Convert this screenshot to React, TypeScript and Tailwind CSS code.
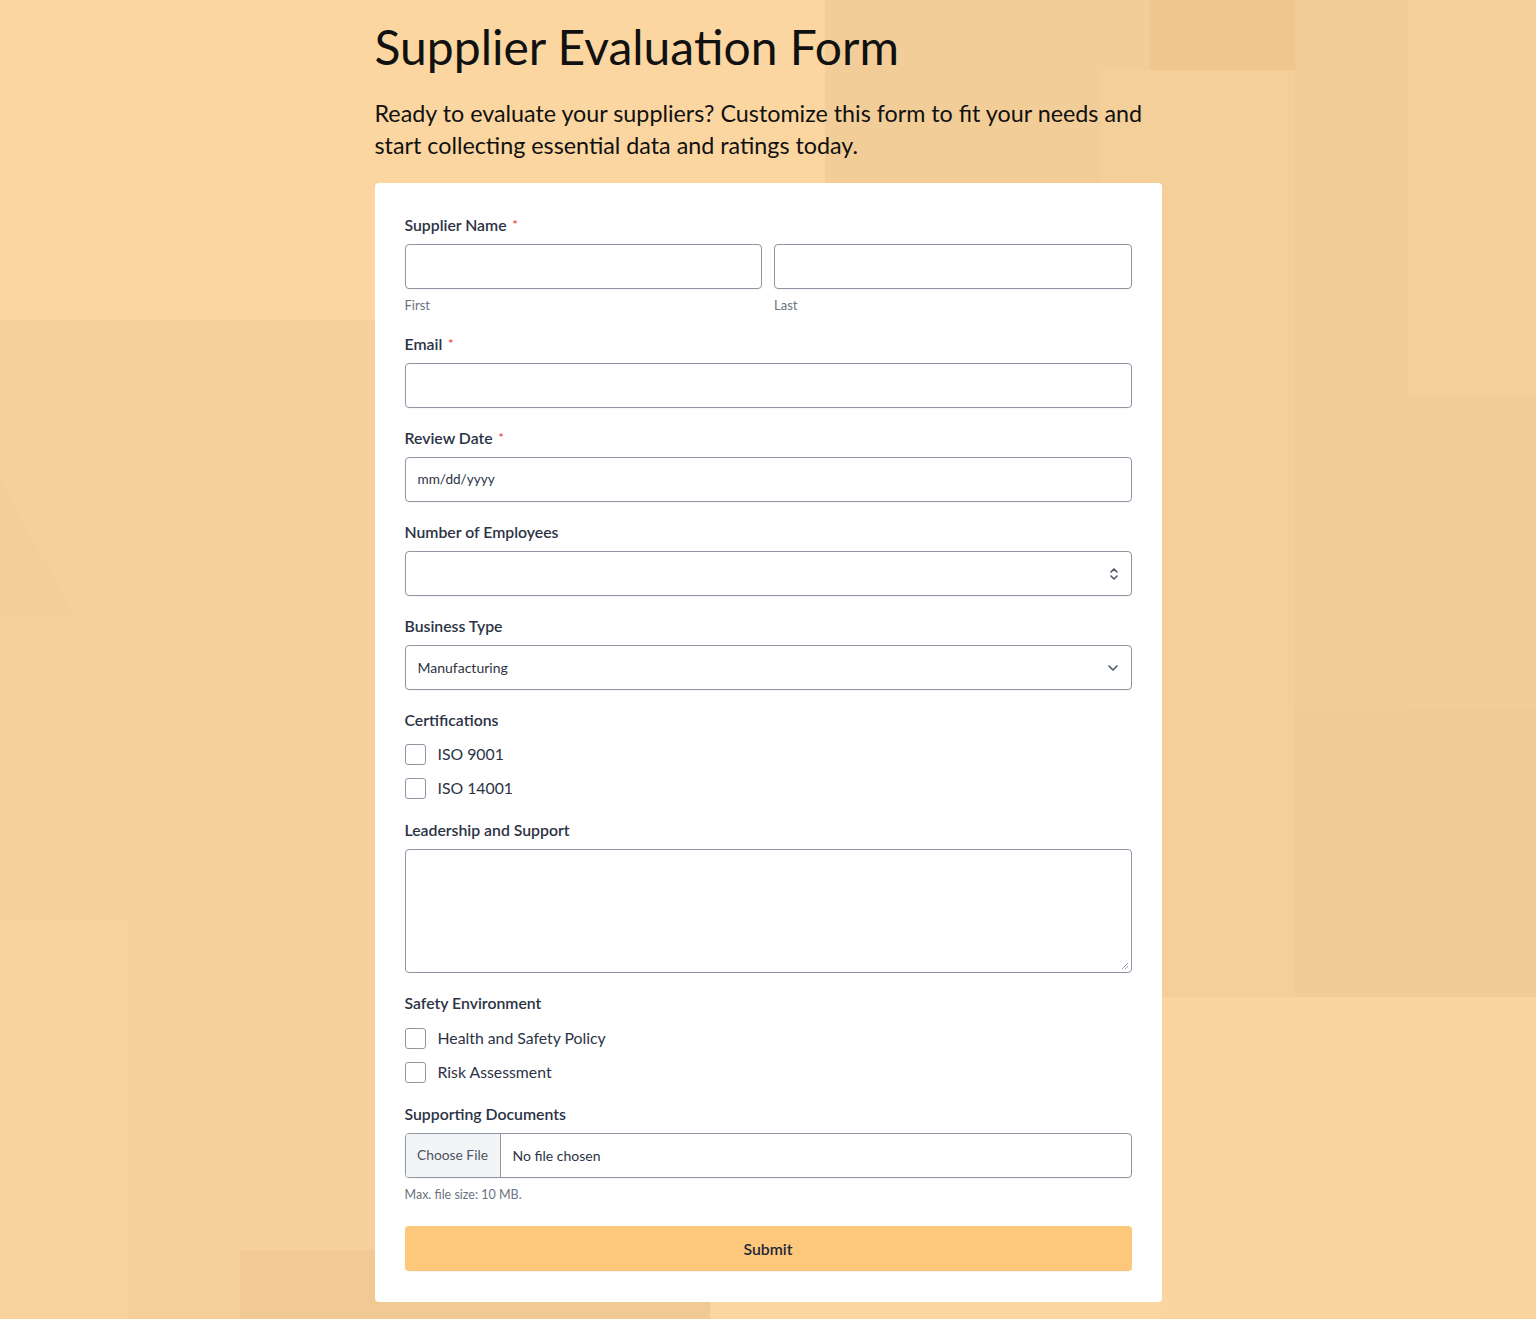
import React from "react";

const font = { fontFamily: "Lato, 'Noto Sans', sans-serif" };

function Label({ text, required }: { text: string; required?: boolean }) {
  return (
    <div className="flex items-center h-5 text-[15.8px] font-semibold text-[#2c3345] leading-5">
      <span>{text}</span>
      {required && <span className="ml-[6px] text-[12px] text-[#f23a3c] leading-none">*</span>}
    </div>
  );
}

function Box({ children, className = "" }: { children?: React.ReactNode; className?: string }) {
  return (
    <div
      className={
        "h-[45px] w-full rounded-[4px] border border-[#8f96a3] bg-white flex items-center shadow-[0_1px_2px_rgba(0,0,0,0.04)] " +
        className
      }
    >
      {children}
    </div>
  );
}

function Check({ text }: { text: string }) {
  return (
    <div className="flex items-center h-[34px]">
      <div className="w-[21px] h-[21px] rounded-[3px] border border-[#8f96a3] bg-white" />
      <span className="ml-3 text-[15.8px] text-[#2c3345]">{text}</span>
    </div>
  );
}

export default function App() {
  return (
    <div className="relative min-h-[1319px] w-full bg-[#FBD6A0] overflow-hidden" style={font}>
      <svg
        className="absolute inset-0 w-full h-full"
        viewBox="0 0 1536 1319"
        preserveAspectRatio="none"
        aria-hidden="true"
      >
        <rect x="0" y="0" width="1536" height="1319" fill="#FBD6A0" />
        <rect x="0" y="320" width="380" height="1000" fill="#F5D09B" />
        <polygon points="0,480 120,700 0,700" fill="#F3CE98" />
        <rect x="0" y="612" width="240" height="708" fill="#F4CF99" />
        <rect x="0" y="920" width="128" height="400" fill="#F7D29D" />
        <rect x="240" y="1250" width="470" height="69" fill="#F0CA92" />
        <rect x="825" y="0" width="711" height="997" fill="#F3CD97" />
        <rect x="1100" y="70" width="195" height="930" fill="#F4CF99" />
        <rect x="1150" y="0" width="145" height="70" fill="#EEC78F" />
        <rect x="1295" y="0" width="113" height="710" fill="#F2CC95" />
        <rect x="1408" y="0" width="128" height="397" fill="#F4CF99" />
        <rect x="1295" y="710" width="241" height="287" fill="#F1CB94" />
        <rect x="1162" y="997" width="374" height="322" fill="#FAD5A0" />
      </svg>

      <div className="relative mx-auto w-[787px] pt-[17px] pb-[17px]">
        <h1 className="text-[48px] leading-[60px] font-normal text-[#111111]">Supplier Evaluation Form</h1>
        <p className="mt-[20px] text-[23.3px] leading-[32px] text-[#111111]">
          Ready to evaluate your suppliers? Customize this form to fit your needs and start collecting essential data
          and ratings today.
        </p>

        <div className="mt-[22px] bg-white rounded-[4px] px-[30px] pt-[32px] pb-[31px]">
          <Label text="Supplier Name" required />
          <div className="mt-[9px] grid grid-cols-2 gap-3">
            <div>
              <Box />
              <div className="mt-2 text-[13px] leading-4 text-[#6b7280]">First</div>
            </div>
            <div>
              <Box />
              <div className="mt-2 text-[13px] leading-4 text-[#6b7280]">Last</div>
            </div>
          </div>

          <div className="mt-[21px]">
            <Label text="Email" required />
            <div className="mt-[9px]">
              <Box />
            </div>
          </div>

          <div className="mt-[20px]">
            <Label text="Review Date" required />
            <div className="mt-[9px]">
              <Box className="px-3">
                <span className="text-[13.6px] text-[#2c3345]">mm/dd/yyyy</span>
              </Box>
            </div>
          </div>

          <div className="mt-[20px]">
            <Label text="Number of Employees" />
            <div className="mt-[9px]">
              <Box className="justify-end pr-[12px]">
                <svg width="10" height="16" viewBox="0 0 10 16" fill="none" stroke="#4b5563" strokeWidth="1.6" strokeLinecap="round" strokeLinejoin="round">
                  <path d="M2 6 L5 3 L8 6" />
                  <path d="M2 10 L5 13 L8 10" />
                </svg>
              </Box>
            </div>
          </div>

          <div className="mt-[20px]">
            <Label text="Business Type" />
            <div className="mt-[9px]">
              <Box className="px-3 justify-between">
                <span className="text-[14px] text-[#2c3345]">Manufacturing</span>
                <svg width="12" height="10" viewBox="0 0 12 10" fill="none" stroke="#4b5563" strokeWidth="1.6" strokeLinecap="round" strokeLinejoin="round">
                  <path d="M2 3 L6 7 L10 3" />
                </svg>
              </Box>
            </div>
          </div>

          <div className="mt-[20px]">
            <Label text="Certifications" />
            <div className="mt-[7px]">
              <Check text="ISO 9001" />
              <Check text="ISO 14001" />
            </div>
          </div>

          <div className="mt-[15px]">
            <Label text="Leadership and Support" />
            <div className="mt-[9px] relative h-[124px] w-full rounded-[4px] border border-[#8f96a3] bg-white">
              <svg className="absolute right-[2px] bottom-[2px]" width="8" height="8" viewBox="0 0 8 8" stroke="#9ca3af" strokeWidth="1">
                <path d="M1 7 L7 1" />
                <path d="M4 7 L7 4" />
              </svg>
            </div>
          </div>

          <div className="mt-[20px]">
            <Label text="Safety Environment" />
            <div className="mt-[8px]">
              <Check text="Health and Safety Policy" />
              <Check text="Risk Assessment" />
            </div>
          </div>

          <div className="mt-[15px]">
            <Label text="Supporting Documents" />
            <div className="mt-[9px]">
              <Box className="overflow-hidden">
                <div className="h-full w-[95px] bg-[#f3f4f6] border-r border-[#8f96a3] flex items-center justify-center text-[13.8px] text-[#4b5563]">
                  Choose File
                </div>
                <span className="ml-3 text-[14px] text-[#2c3345]">No file chosen</span>
              </Box>
            </div>
            <div className="mt-[9px] text-[12.5px] leading-4 text-[#6b7280]">Max. file size: 10 MB.</div>
          </div>

          <button className="mt-[23px] w-full h-[45px] rounded-[4px] bg-[#FEC87C] text-[15.8px] font-semibold text-[#1f2937] shadow-[0_1px_2px_rgba(0,0,0,0.06)]">
            Submit
          </button>
        </div>
      </div>
    </div>
  );
}
